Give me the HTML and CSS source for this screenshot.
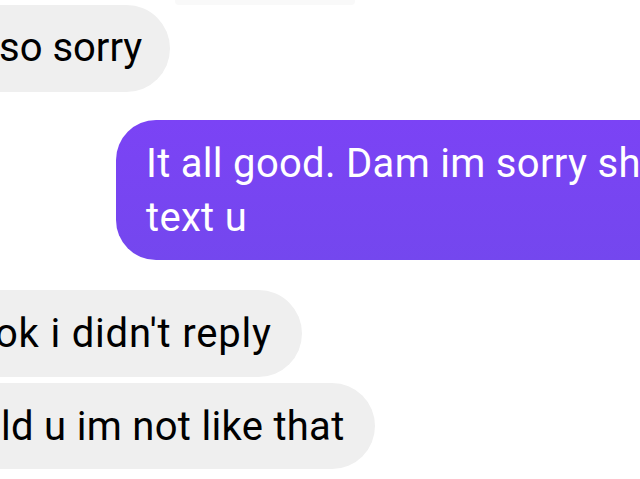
FILE: index.html
```html
<!DOCTYPE html>
<html lang="en">
<head>
    <meta charset="UTF-8" />
    <title>Messages</title>
    <link rel="stylesheet" href="styles.css">
</head>
<body>
    <div class="chat">
        <!-- bottom edge of the previous bubble, scrolled off the top -->
        <div class="prev-edge"></div>

        <div class="bubble received first">so sorry</div>

        <div class="bubble sent">It all good. Dam im sorry sh<br />text u</div>

        <div class="bubble received wide">ok i didn't reply</div>
        <div class="bubble received tight">ld u im not like that</div>
    </div>
</body>
</html>
```

FILE: styles.css
```css
body {
    margin: 0;
    background-color: #fff;
    font-family: Roboto, "Liberation Sans", Arial, sans-serif;
    width: 640px;
    height: 479px;
    overflow: hidden;
}

.chat {
    display: flex;
    flex-direction: column;
    align-items: flex-start;
}

.prev-edge {
    margin-left: 175px;
    width: 180px;
    height: 5px;
    background: #f9f9f9;
    border-radius: 0 0 4px 4px;
}

.bubble {
    font-size: 40px;
    line-height: 54px;
    letter-spacing: 0.3px;
    white-space: nowrap;
    box-sizing: border-box;
}

.received {
    background: #efefef;
    color: #000;
    height: 87px;
    padding: 17px 30px 16px 42px;
    margin-left: -42px;
    border-radius: 44px;
}

    .received.first {
        letter-spacing: 0;
        padding: 16px 28px 17px 42px;
        margin-left: -43px;
    }

    .received.wide {
        letter-spacing: 0.8px;
        margin-left: -47px;
    }

    .received.tight {
        margin-top: 6px;
        height: 86px;
        margin-left: -41px;
    }

.sent {
    align-self: stretch;
    margin: 28px -60px 30px 116px;
    height: 140px;
    padding: 17px 30px 15px 30px;
    color: #fff;
    background: linear-gradient(180deg, #7b43f5 0%, #7447ee 100%);
    border-radius: 40px;
    overflow: hidden;
}
```
